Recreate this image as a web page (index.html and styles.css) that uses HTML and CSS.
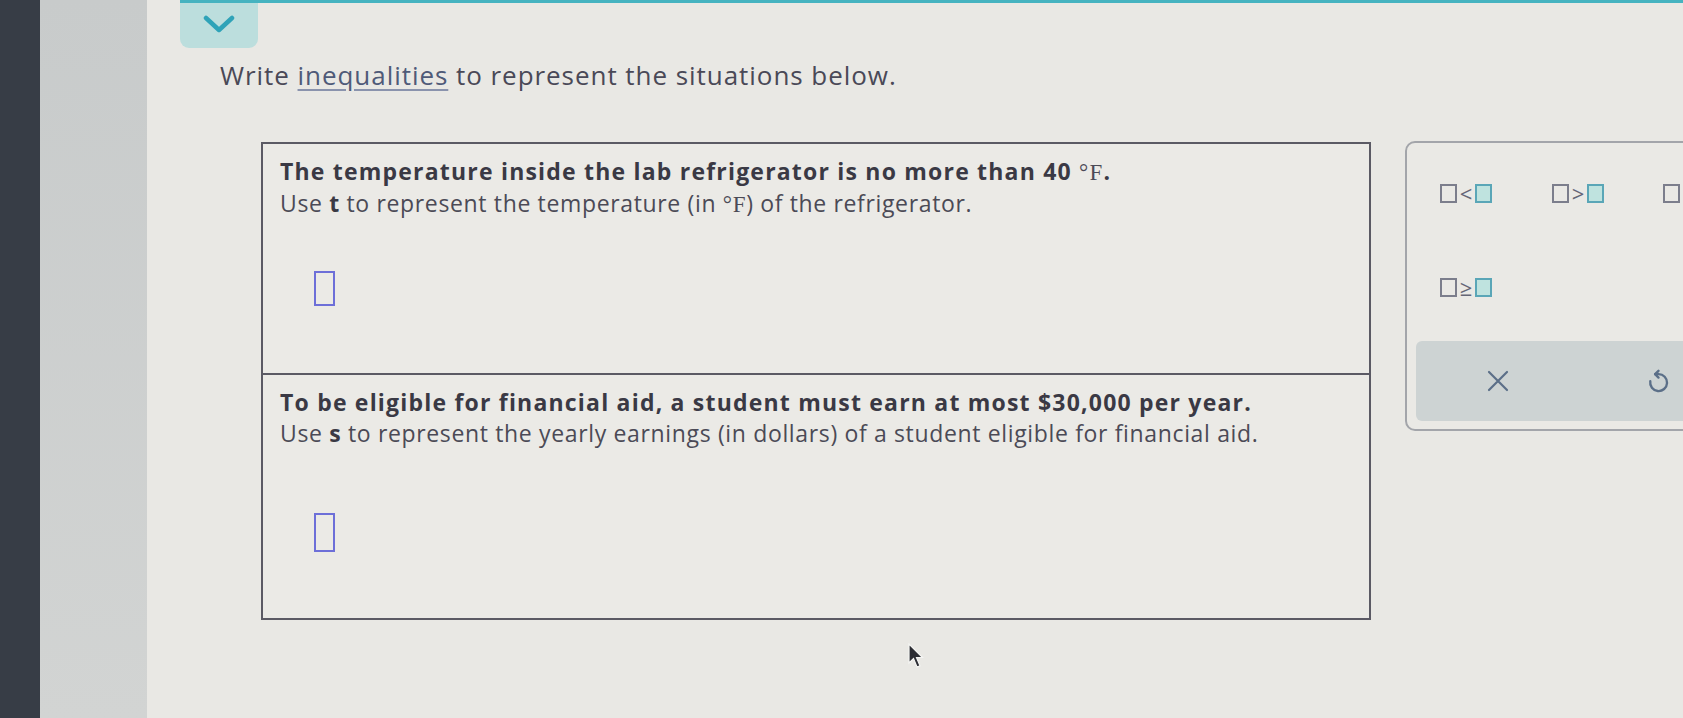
FILE: index.html
```html
<!DOCTYPE html>
<html lang="en">
<head>
    <meta charset="UTF-8">
    <title>Write inequalities</title>
    <link rel="stylesheet" href="styles.css">
</head>
<body>
    <div class="edge"></div>
    <div class="side"></div>

    <div class="main">
        <div class="topline">
            <div class="tab">
                <svg width="32" height="20" viewBox="0 0 32 20">
                    <path d="M3 4 L16 16 L29 4" fill="none" stroke="#2fa3b8" stroke-width="4.5" stroke-linecap="round" stroke-linejoin="round"/>
                </svg>
            </div>
        </div>

        <h1 class="prompt">Write <span class="link">inequalities</span> to represent the situations below.</h1>

        <div class="work">
            <div class="questions">
                <div class="question">
                    <p class="lead">The temperature inside the lab refrigerator is no more than 40 <span class="unit">°F</span>.</p>
                    <p>Use <b>t</b> to represent the temperature (in <span class="unit">°F</span>) of the refrigerator.</p>
                    <div class="answer"></div>
                </div>
                <div class="question second">
                    <p class="lead">To be eligible for financial aid, a student must earn at most $30,000 per year.</p>
                    <p>Use <b>s</b> to represent the yearly earnings (in dollars) of a student eligible for financial aid.</p>
                    <div class="answer"></div>
                </div>
            </div>

            <div class="keypad">
                <div class="keys">
                    <div class="key"><span class="box"></span><span class="op">&lt;</span><span class="box fill"></span></div>
                    <div class="key"><span class="box"></span><span class="op">&gt;</span><span class="box fill"></span></div>
                    <div class="key"><span class="box"></span><span class="op">&le;</span><span class="box fill"></span></div>
                    <div class="key"><span class="box"></span><span class="op">&ge;</span><span class="box fill"></span></div>
                </div>
                <div class="actions">
                    <div class="action">
                        <svg width="24" height="24" viewBox="0 0 24 24">
                            <path d="M3 3 L21 21 M21 3 L3 21" stroke="#5b6f88" stroke-width="2.2" fill="none" stroke-linecap="round"/>
                        </svg>
                    </div>
                    <div class="action">
                        <svg width="27" height="27" viewBox="0 0 24 24">
                            <path d="M9 5.5 H12 A7.5 7.5 0 1 1 4.7 11.8" stroke="#5b6f88" stroke-width="2.1" fill="none" stroke-linecap="round"/>
                            <path d="M12 2.5 L9 5.5 L12 8.5" stroke="#5b6f88" stroke-width="2.1" fill="none" stroke-linecap="round" stroke-linejoin="round"/>
                        </svg>
                    </div>
                </div>
            </div>
        </div>

        <svg class="cursor" width="16" height="26" viewBox="0 0 16 26">
            <path d="M1 1 L1 20 L5.5 15.5 L9 24 L12 22.8 L8.5 14.5 L14.5 14.5 Z" fill="#2c2d33" stroke="#f4f4f2" stroke-width="1.2"/>
        </svg>
    </div>
</body>
</html>
```

FILE: styles.css
```css
html, body {
    margin: 0;
    height: 100%;
}
body {
    display: flex;
    overflow: hidden;
    font-family: "Open Sans", "DejaVu Sans", sans-serif;
    color: #46454f;
    background: #e6e5e1;
}
.edge {
    width: 40px;
    flex: none;
    background: #373d46;
}
.side {
    width: 107px;
    flex: none;
    background: linear-gradient(180deg, #c8cbcb 0%, #d2d4d3 100%);
}
.main {
    flex: 1;
    position: relative;
    background: #e9e8e4;
}
.topline {
    margin-left: 33px;
    border-top: 3px solid #46b3c0;
    height: 45px;
}
.tab {
    width: 78px;
    height: 45px;
    background: #bcdedd;
    border-radius: 0 0 9px 9px;
    display: flex;
    align-items: center;
    justify-content: center;
}
.tab svg {
    margin-top: -4px;
}
.prompt {
    margin: 11px 0 0 73px;
    font-size: 26px;
    line-height: 32px;
    letter-spacing: 0.95px;
    font-weight: normal;
    color: #4a4957;
}
.link {
    color: #4f5a78;
    text-decoration: underline;
    text-decoration-color: #8a93ad;
    text-underline-offset: 4px;
}
.work {
    display: flex;
    align-items: flex-start;
    margin: 51px 0 0 114px;
}
.questions {
    width: 1106px;
    flex: none;
    border: 2px solid #5b5a64;
    background: #ebeae6;
}
.question {
    height: 229px;
    padding: 12px 0 0 17px;
    box-sizing: border-box;
}
.question.second {
    height: 245px;
    border-top: 2px solid #5b5a64;
}
.question p {
    margin: 0;
    font-size: 23px;
    line-height: 31px;
    letter-spacing: 0.65px;
    color: #4b4a56;
}
.question p.lead {
    font-weight: bold;
    letter-spacing: 1.2px;
    color: #3a3944;
}
.question b {
    color: #3a3944;
}
.unit {
    font-family: "Liberation Serif", serif;
    font-weight: normal;
    color: #4b4a56;
}
.answer {
    width: 17px;
    height: 31px;
    margin: 51px 0 0 34px;
    border: 2px solid #6d6fd8;
}
.question.second .answer {
    height: 35px;
    margin-top: 64px;
}
.keypad {
    width: 330px;
    flex: none;
    margin-left: 34px;
    margin-top: -1px;
    border: 2px solid #a3a5aa;
    border-radius: 10px;
    padding: 20px 0 8px 9px;
    background: #eae9e5;
}
.keys {
    display: grid;
    grid-template-columns: repeat(3, 100px);
    grid-auto-rows: 60px;
    column-gap: 12px;
    row-gap: 34px;
}
.key {
    display: flex;
    align-items: center;
    justify-content: center;
    gap: 2px;
}
.key:nth-child(3) {
    justify-content: flex-start;
    padding-left: 23px;
}
.box {
    width: 13px;
    height: 15px;
    border: 2px solid #7c7e8c;
}
.box.fill {
    background: #bfe3df;
    border-color: #5aa6b7;
}
.op {
    font-size: 22px;
    line-height: 20px;
    color: #646676;
    width: 14px;
    text-align: center;
}
.actions {
    display: flex;
    margin-top: 24px;
    height: 80px;
    background: #cdd3d3;
    border-radius: 6px;
}
.action {
    width: 164px;
    display: flex;
    align-items: center;
    justify-content: center;
}
.action + .action {
    margin-left: -4px;
}
.cursor {
    position: absolute;
    left: 761px;
    top: 643px;
}
```
